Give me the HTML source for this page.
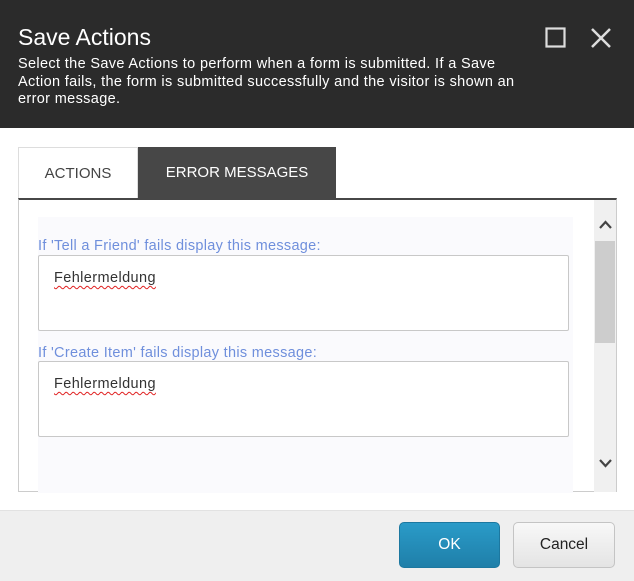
<!DOCTYPE html>
<html><head><style>
*{margin:0;padding:0;box-sizing:border-box}
body{width:634px;height:581px;overflow:hidden;background:#fff;font-family:"Liberation Sans",Arial,sans-serif;position:relative}
.hdr{position:absolute;left:0;top:0;width:634px;height:128px;background:#2b2b2b;color:#fff}
.hdr h1{position:absolute;left:18px;top:24px;font-size:23px;font-weight:normal}
.hdr p{position:absolute;left:18px;top:56px;width:505px;font-size:14.5px;line-height:17.5px;letter-spacing:0.35px}
.tab{position:absolute;top:147px;height:52px;font-size:15px;line-height:52px;text-align:center}
.t1{left:18px;width:120px;border:1px solid #ddd;border-bottom:none;color:#444;background:#fff}
.t2{left:138px;width:198px;background:#474747;color:#fff}
.panel{position:absolute;left:18px;top:198px;width:599px;height:294px;border:1px solid #ccc;border-top:2px solid #474747}
.inner{position:absolute;left:19px;top:17px;width:535px;height:276px;background:#fafafd}
.lbl{position:absolute;left:0;font-size:14.5px;color:#6f8fdc;letter-spacing:0.3px}
.ta{position:absolute;left:0;width:531px;height:76px;background:#fff;border:1px solid #c8c8c8;border-radius:2px}
.ta span{position:absolute;left:15px;top:14px;font-size:14.5px;color:#333;letter-spacing:0.4px;text-decoration:underline wavy #e02020;text-decoration-thickness:1px;text-underline-offset:3px}
.sb{position:absolute;right:0;top:0;width:22px;height:292px;background:#f0f0f0}
.thumb{position:absolute;left:1px;top:41px;width:20px;height:102px;background:#cdcdcd}
.ft{position:absolute;left:0;top:510px;width:634px;height:71px;background:#efefef;border-top:1px solid #e2e2e2}
.btn{position:absolute;top:11px;height:46px;border-radius:5px;font-size:15.5px;line-height:44px;text-align:center}
.ok{left:399px;width:101px;background:linear-gradient(#2a9bc8,#1f7fa9);color:#fff;border:1px solid #1c78a0}
.cn{left:513px;width:102px;background:linear-gradient(#f8f8f8,#e4e4e4);color:#222;border:1px solid #c4c4c4}
</style></head><body>
<div class="hdr"><h1>Save Actions</h1>
<p>Select the Save Actions to perform when a form is submitted. If a Save Action fails, the form is submitted successfully and the visitor is shown an error message.</p>
<svg style="position:absolute;left:545px;top:27px" width="22" height="22"><rect x="1.5" y="1.5" width="18" height="18" fill="none" stroke="#ddd" stroke-width="2.2"/></svg>
<svg style="position:absolute;left:590px;top:27px" width="22" height="22"><path d="M2 2L20 20M20 2L2 20" stroke="#ddd" stroke-width="2.5"/></svg>
</div>
<div class="tab t1">ACTIONS</div>
<div class="tab t2">ERROR MESSAGES</div>
<div class="panel">
<div class="inner">
<div class="lbl" style="top:21px">If 'Tell a Friend' fails display this message:</div>
<div class="ta" style="top:38px"><span>Fehlermeldung</span></div>
<div class="lbl" style="top:128px">If 'Create Item' fails display this message:</div>
<div class="ta" style="top:144px"><span>Fehlermeldung</span></div>
</div>
<div class="sb"><div class="thumb"></div>
<svg style="position:absolute;left:5px;top:20px" width="13" height="10"><path d="M1 8L6.5 2L12 8" fill="none" stroke="#444" stroke-width="2.2"/></svg>
<svg style="position:absolute;left:5px;top:258px" width="13" height="10"><path d="M1 2L6.5 8L12 2" fill="none" stroke="#444" stroke-width="2.2"/></svg>
</div>
</div>
<div class="ft"><div class="btn ok">OK</div><div class="btn cn">Cancel</div></div>
</body></html>
